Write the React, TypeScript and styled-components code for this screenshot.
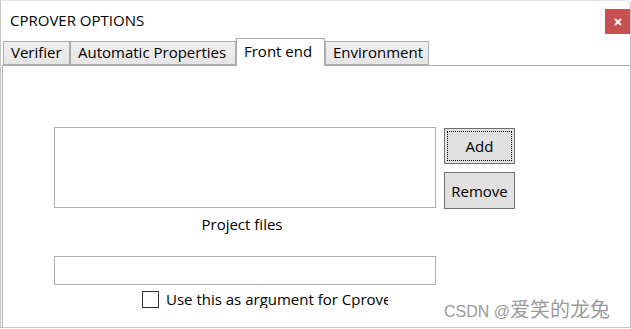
import styled, { createGlobalStyle } from 'styled-components';

const GlobalStyle = createGlobalStyle`
  html, body {
    margin: 0;
    padding: 0;
    background: #ffffff;
  }
  body {
    font-family: "Open Sans", "Noto Sans", sans-serif;
    color: #000;
  }
`;

const Window = styled.div`
  position: relative;
  box-sizing: border-box;
  width: 631px;
  height: 328px;
  border: 1px solid #c4c4c4;
  border-top-color: #e4e4e4;
  border-top-right-radius: 6px;
  background: #fff;
  display: flex;
  flex-direction: column;
  overflow: hidden;
`;

const TitleBar = styled.header`
  display: flex;
  justify-content: space-between;
  align-items: flex-start;
  height: 37px;
  padding: 8px 0 0 9px;
  box-sizing: border-box;
`;

const Title = styled.h1`
  margin: 0;
  font-size: 15px;
  font-weight: 400;
  line-height: 22px;
`;

const CloseButton = styled.button`
  width: 25px;
  height: 25px;
  padding: 0;
  border: none;
  background: #c75050;
  display: flex;
  align-items: center;
  justify-content: center;
`;

const TabStrip = styled.nav`
  display: flex;
  align-items: flex-end;
  height: 27px;
  padding-left: 2px;
  position: relative;
  z-index: 1;
`;

const Tab = styled.div<{ $w: number; $active?: boolean }>`
  box-sizing: border-box;
  width: ${(p) => p.$w}px;
  height: ${(p) => (p.$active ? 28 : 24)}px;
  margin-bottom: ${(p) => (p.$active ? -1 : 0)}px;
  border: 1px solid #acacac;
  border-bottom: ${(p) => (p.$active ? 'none' : '1px solid #acacac')};
  background: ${(p) => (p.$active ? '#fff' : 'linear-gradient(#f0f0f0, #e5e5e5)')};
  font-size: 15px;
  line-height: ${(p) => (p.$active ? 25 : 21)}px;
  padding-left: 7px;
  white-space: nowrap;
  overflow: hidden;
`;

const Panel = styled.section`
  flex: 1;
  border-top: 1px solid #acacac;
  border-left: 1px solid #b4b4b4;
  margin-left: 1px;
  padding: 61px 0 0 51px;
  display: flex;
  gap: 8px;
  align-items: flex-start;
`;

const LeftColumn = styled.div`
  width: 382px;
  display: flex;
  flex-direction: column;
`;

const ListBox = styled.div`
  box-sizing: border-box;
  height: 81px;
  border: 1px solid #abadb3;
  background: #fff;
`;

const Caption = styled.div`
  margin-top: 6px;
  text-align: center;
  font-size: 15px;
  line-height: 20px;
  padding-right: 6px;
`;

const TextBox = styled.div`
  box-sizing: border-box;
  margin-top: 22px;
  height: 29px;
  border: 1px solid #abadb3;
`;

const CheckRow = styled.label`
  display: flex;
  align-items: center;
  gap: 7px;
  margin: 5px 0 0 88px;
  width: 246px;
  overflow: hidden;
  white-space: nowrap;
  font-size: 15px;
  line-height: 18px;
`;

const CheckBox = styled.span`
  flex: none;
  box-sizing: border-box;
  width: 17px;
  height: 17px;
  border: 1px solid #333;
  background: #fff;
`;

const ButtonColumn = styled.div`
  display: flex;
  flex-direction: column;
  gap: 8px;
  padding-top: 1px;
`;

const Button = styled.button<{ $h: number; $focused?: boolean }>`
  position: relative;
  box-sizing: border-box;
  width: 71px;
  height: ${(p) => p.$h}px;
  border: 1px solid #707070;
  background: #e1e1e1;
  font-family: inherit;
  font-size: 15px;
  color: #000;
  padding: 0;
  &::after {
    content: '';
    display: ${(p) => (p.$focused ? 'block' : 'none')};
    position: absolute;
    inset: 2px;
    border: 1px dotted #000;
  }
`;

const Watermark = styled.div`
  position: absolute;
  left: 443px;
  top: 296px;
  color: #9a9a9a;
  font-family: "Liberation Sans", Arial, sans-serif;
  font-size: 16px;
  line-height: 24px;
  white-space: nowrap;
  text-shadow: 0 0 1px #fff;
  & span {
    font-family: "Noto Sans CJK SC", sans-serif;
    font-size: 20px;
  }
`;

export default function App() {
  return (
    <>
      <GlobalStyle />
      <Window>
        <TitleBar>
          <Title>CPROVER OPTIONS</Title>
          <CloseButton aria-label="Close">
            <svg width="8" height="8" viewBox="0 0 8 8">
              <path d="M1 1 L7 7 M7 1 L1 7" stroke="#fff" strokeWidth="1.8" />
            </svg>
          </CloseButton>
        </TitleBar>
        <TabStrip>
          <Tab $w={67}>Verifier</Tab>
          <Tab $w={166}>Automatic Properties</Tab>
          <Tab $w={89} $active>Front end</Tab>
          <Tab $w={104}>Environment</Tab>
        </TabStrip>
        <Panel>
          <LeftColumn>
            <ListBox />
            <Caption>Project files</Caption>
            <TextBox />
            <CheckRow>
              <CheckBox />
              Use this as argument for Cprover
            </CheckRow>
          </LeftColumn>
          <ButtonColumn>
            <Button $h={36} $focused>Add</Button>
            <Button $h={37}>Remove</Button>
          </ButtonColumn>
        </Panel>
        <Watermark>
          CSDN @<span>爱笑的龙兔</span>
        </Watermark>
      </Window>
    </>
  );
}
